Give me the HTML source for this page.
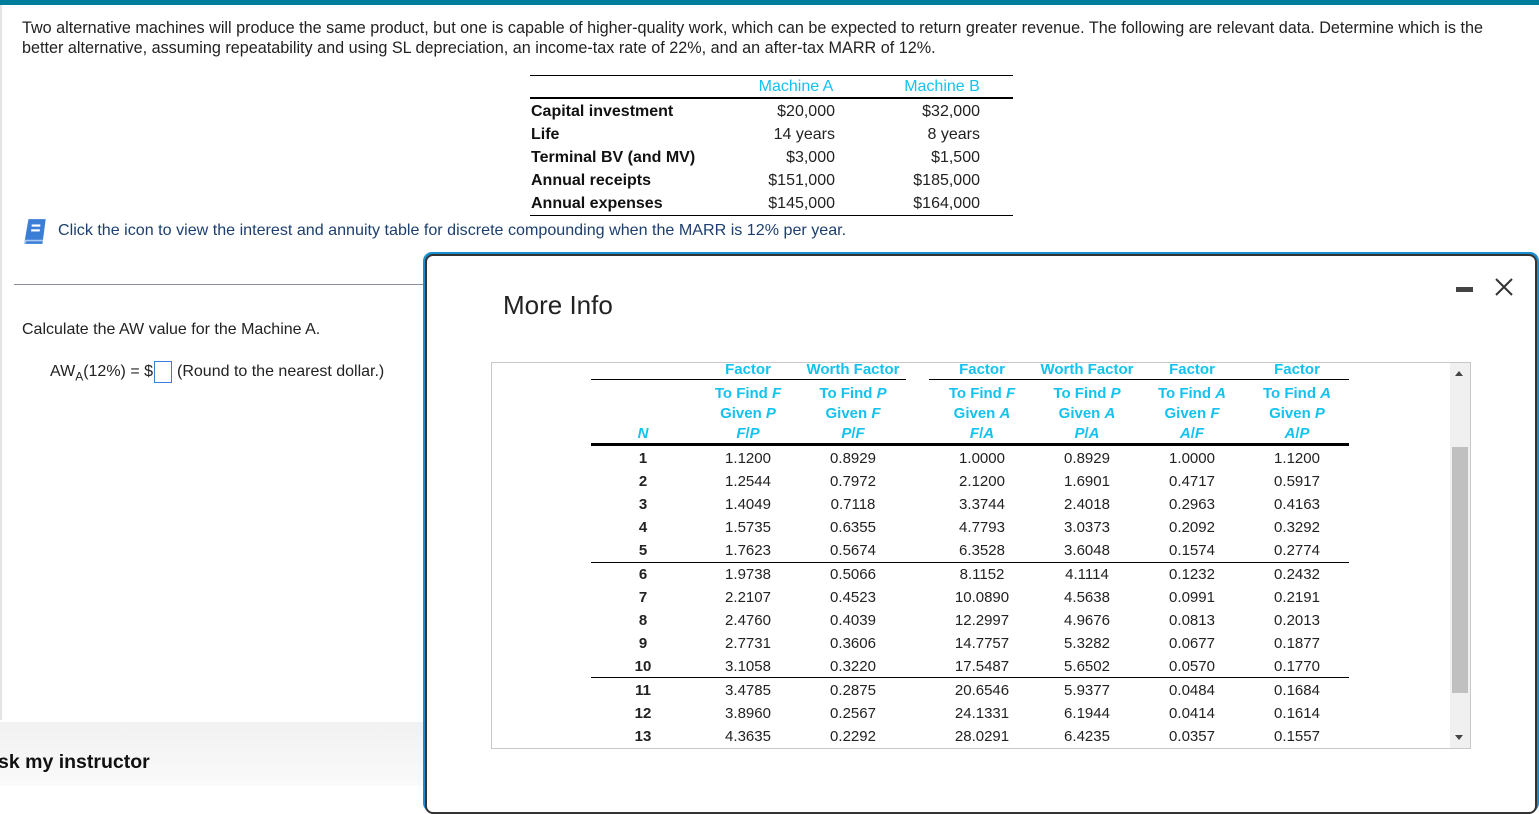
<!DOCTYPE html>
<html><head><meta charset="utf-8"><style>
*{margin:0;padding:0;box-sizing:border-box}
body{width:1539px;height:786px;position:relative;overflow:hidden;background:#fff;font-family:"Liberation Sans",Arial,sans-serif;color:#222}
.a{position:absolute;white-space:nowrap}
.c{position:absolute;white-space:nowrap;transform:translateX(-50%)}
.r{position:absolute;white-space:nowrap;transform:translateX(-100%)}
.cy{color:#14c2ef;font-weight:bold;font-size:15px}
.hl{position:absolute;background:#000}
.t{font-size:16px;color:#222}
.b{font-weight:bold;font-size:16px;color:#111}
</style></head><body>
<div class="a" style="left:0;top:0;width:1539px;height:5px;background:#007c9c"></div>
<div class="a" style="left:0;top:5px;width:2px;height:715px;background:#e4e4e4"></div>
<div class="a" style="left:22px;top:18px;font-size:16.2px;line-height:20px">Two alternative machines will produce the same product, but one is capable of higher-quality work, which can be expected to return greater revenue. The following are relevant data. Determine which is the<br>better alternative, assuming repeatability and using SL depreciation, an income-tax rate of 22%, and an after-tax MARR of 12%.</div>

<div class="hl" style="left:530px;top:75px;width:483px;height:1px"></div>
<div class="hl" style="left:530px;top:97px;width:483px;height:2px"></div>
<div class="hl" style="left:530px;top:215px;width:483px;height:1px"></div>
<div class="c cy" style="left:796px;top:78px;font-weight:normal;font-size:16px">Machine A</div>
<div class="c cy" style="left:942px;top:78px;font-weight:normal;font-size:16px">Machine B</div>
<div class="a b" style="left:531px;top:103px">Capital investment</div>
<div class="a b" style="left:531px;top:126px">Life</div>
<div class="a b" style="left:531px;top:149px">Terminal BV (and MV)</div>
<div class="a b" style="left:531px;top:172px">Annual receipts</div>
<div class="a b" style="left:531px;top:195px">Annual expenses</div>
<div class="r t" style="left:835px;top:103px">$20,000</div><div class="r t" style="left:980px;top:103px">$32,000</div>
<div class="r t" style="left:835px;top:126px">14 years</div><div class="r t" style="left:980px;top:126px">8 years</div>
<div class="r t" style="left:835px;top:149px">$3,000</div><div class="r t" style="left:980px;top:149px">$1,500</div>
<div class="r t" style="left:835px;top:172px">$151,000</div><div class="r t" style="left:980px;top:172px">$185,000</div>
<div class="r t" style="left:835px;top:195px">$145,000</div><div class="r t" style="left:980px;top:195px">$164,000</div>

<svg class="a" style="left:22px;top:218px" width="28" height="28" viewBox="0 0 26 26"><path d="M6 1h16l-3 23H2z" fill="#3a7fd5"/><path d="M2.5 24l1-3h16" stroke="#a9c9f0" stroke-width="1.5" fill="none"/><rect x="9" y="6" width="8" height="2" fill="#fff"/><rect x="8.5" y="10.5" width="8" height="2" fill="#fff"/></svg>
<div class="a" style="left:58px;top:221px;font-size:16.1px;color:#1d3f6e">Click the icon to view the interest and annuity table for discrete compounding when the MARR is 12% per year.</div>

<div class="a" style="left:14px;top:284px;width:412px;height:1px;background:#8a8f98"></div>
<div class="a" style="left:22px;top:321px;font-size:16px">Calculate the AW value for the Machine A.</div>
<div class="a" style="left:50px;top:361px;font-size:16px">AW<sub style="font-size:12px">A</sub>(12%) = $<span style="display:inline-block;width:18px;height:22px;border:1px solid #3a7fd5;vertical-align:middle;margin:0 5px 0 1px"></span>(Round to the nearest dollar.)</div>

<div class="a" style="left:0;top:722px;width:426px;height:64px;background:linear-gradient(#f1f1f1,#fafafa)"></div>
<div class="a" style="left:-2px;top:751px;font-size:19.5px;font-weight:bold;color:#111">sk my instructor</div>

<!-- modal -->
<div class="a" style="left:423px;top:252px;width:1116px;height:560px;border:3px solid #1a8fd0;border-radius:9px"></div>
<div class="a" style="left:425px;top:254px;width:1112px;height:560px;border:2px solid #333;border-radius:8px;background:#fff"></div>
<div class="a" style="left:503px;top:290px;font-size:26px;color:#222">More Info</div>
<div class="a" style="left:1456px;top:287px;width:17px;height:5px;background:#444"></div>
<svg class="a" style="left:1494px;top:277px" width="20" height="20"><path d="M2 2L18 18M18 2L2 18" stroke="#333" stroke-width="2"/></svg>

<div class="a" style="left:491px;top:362px;width:980px;height:387px;border:1px solid #c8c8c8"></div>
<div class="a" style="left:1450px;top:363px;width:20px;height:385px;background:#f0f0f0"></div>
<div class="a" style="left:1452px;top:447px;width:16px;height:246px;background:#c0c0c0"></div>
<div class="a" style="left:1455px;top:371px;width:0;height:0;border-left:4px solid transparent;border-right:4px solid transparent;border-bottom:5px solid #444"></div>
<div class="a" style="left:1455px;top:735px;width:0;height:0;border-left:4px solid transparent;border-right:4px solid transparent;border-top:5px solid #444"></div>

<div class="hl" style="left:591px;top:379px;width:315px;height:1px"></div>
<div class="hl" style="left:929px;top:379px;width:420px;height:1px"></div>
<div class="hl" style="left:591px;top:443px;width:758px;height:3px"></div>
<div class="hl" style="left:591px;top:562px;width:758px;height:1px"></div>
<div class="hl" style="left:591px;top:677px;width:758px;height:1px"></div>

<div class="c cy" style="left:748px;top:361px">Factor</div>
<div class="c cy" style="left:853px;top:361px">Worth Factor</div>
<div class="c cy" style="left:982px;top:361px">Factor</div>
<div class="c cy" style="left:1087px;top:361px">Worth Factor</div>
<div class="c cy" style="left:1192px;top:361px">Factor</div>
<div class="c cy" style="left:1297px;top:361px">Factor</div>

<div class="c cy" style="left:748px;top:385px">To Find <i>F</i></div>
<div class="c cy" style="left:853px;top:385px">To Find <i>P</i></div>
<div class="c cy" style="left:982px;top:385px">To Find <i>F</i></div>
<div class="c cy" style="left:1087px;top:385px">To Find <i>P</i></div>
<div class="c cy" style="left:1192px;top:385px">To Find <i>A</i></div>
<div class="c cy" style="left:1297px;top:385px">To Find <i>A</i></div>
<div class="c cy" style="left:748px;top:405px">Given <i>P</i></div>
<div class="c cy" style="left:853px;top:405px">Given <i>F</i></div>
<div class="c cy" style="left:982px;top:405px">Given <i>A</i></div>
<div class="c cy" style="left:1087px;top:405px">Given <i>A</i></div>
<div class="c cy" style="left:1192px;top:405px">Given <i>F</i></div>
<div class="c cy" style="left:1297px;top:405px">Given <i>P</i></div>
<div class="c cy" style="left:643px;top:425px"><i>N</i></div>
<div class="c cy" style="left:748px;top:425px"><i>F</i>/<i>P</i></div>
<div class="c cy" style="left:853px;top:425px"><i>P</i>/<i>F</i></div>
<div class="c cy" style="left:982px;top:425px"><i>F</i>/<i>A</i></div>
<div class="c cy" style="left:1087px;top:425px"><i>P</i>/<i>A</i></div>
<div class="c cy" style="left:1192px;top:425px"><i>A</i>/<i>F</i></div>
<div class="c cy" style="left:1297px;top:425px"><i>A</i>/<i>P</i></div>

<div class="a" style="left:0;top:0;font-size:15px">
<div class="c" style="left:643px;top:450px;font-weight:bold">1</div><div class="c" style="left:748px;top:450px">1.1200</div><div class="c" style="left:853px;top:450px">0.8929</div><div class="c" style="left:982px;top:450px">1.0000</div><div class="c" style="left:1087px;top:450px">0.8929</div><div class="c" style="left:1192px;top:450px">1.0000</div><div class="c" style="left:1297px;top:450px">1.1200</div>
<div class="c" style="left:643px;top:473px;font-weight:bold">2</div><div class="c" style="left:748px;top:473px">1.2544</div><div class="c" style="left:853px;top:473px">0.7972</div><div class="c" style="left:982px;top:473px">2.1200</div><div class="c" style="left:1087px;top:473px">1.6901</div><div class="c" style="left:1192px;top:473px">0.4717</div><div class="c" style="left:1297px;top:473px">0.5917</div>
<div class="c" style="left:643px;top:496px;font-weight:bold">3</div><div class="c" style="left:748px;top:496px">1.4049</div><div class="c" style="left:853px;top:496px">0.7118</div><div class="c" style="left:982px;top:496px">3.3744</div><div class="c" style="left:1087px;top:496px">2.4018</div><div class="c" style="left:1192px;top:496px">0.2963</div><div class="c" style="left:1297px;top:496px">0.4163</div>
<div class="c" style="left:643px;top:519px;font-weight:bold">4</div><div class="c" style="left:748px;top:519px">1.5735</div><div class="c" style="left:853px;top:519px">0.6355</div><div class="c" style="left:982px;top:519px">4.7793</div><div class="c" style="left:1087px;top:519px">3.0373</div><div class="c" style="left:1192px;top:519px">0.2092</div><div class="c" style="left:1297px;top:519px">0.3292</div>
<div class="c" style="left:643px;top:542px;font-weight:bold">5</div><div class="c" style="left:748px;top:542px">1.7623</div><div class="c" style="left:853px;top:542px">0.5674</div><div class="c" style="left:982px;top:542px">6.3528</div><div class="c" style="left:1087px;top:542px">3.6048</div><div class="c" style="left:1192px;top:542px">0.1574</div><div class="c" style="left:1297px;top:542px">0.2774</div>
<div class="c" style="left:643px;top:566px;font-weight:bold">6</div><div class="c" style="left:748px;top:566px">1.9738</div><div class="c" style="left:853px;top:566px">0.5066</div><div class="c" style="left:982px;top:566px">8.1152</div><div class="c" style="left:1087px;top:566px">4.1114</div><div class="c" style="left:1192px;top:566px">0.1232</div><div class="c" style="left:1297px;top:566px">0.2432</div>
<div class="c" style="left:643px;top:589px;font-weight:bold">7</div><div class="c" style="left:748px;top:589px">2.2107</div><div class="c" style="left:853px;top:589px">0.4523</div><div class="c" style="left:982px;top:589px">10.0890</div><div class="c" style="left:1087px;top:589px">4.5638</div><div class="c" style="left:1192px;top:589px">0.0991</div><div class="c" style="left:1297px;top:589px">0.2191</div>
<div class="c" style="left:643px;top:612px;font-weight:bold">8</div><div class="c" style="left:748px;top:612px">2.4760</div><div class="c" style="left:853px;top:612px">0.4039</div><div class="c" style="left:982px;top:612px">12.2997</div><div class="c" style="left:1087px;top:612px">4.9676</div><div class="c" style="left:1192px;top:612px">0.0813</div><div class="c" style="left:1297px;top:612px">0.2013</div>
<div class="c" style="left:643px;top:635px;font-weight:bold">9</div><div class="c" style="left:748px;top:635px">2.7731</div><div class="c" style="left:853px;top:635px">0.3606</div><div class="c" style="left:982px;top:635px">14.7757</div><div class="c" style="left:1087px;top:635px">5.3282</div><div class="c" style="left:1192px;top:635px">0.0677</div><div class="c" style="left:1297px;top:635px">0.1877</div>
<div class="c" style="left:643px;top:658px;font-weight:bold">10</div><div class="c" style="left:748px;top:658px">3.1058</div><div class="c" style="left:853px;top:658px">0.3220</div><div class="c" style="left:982px;top:658px">17.5487</div><div class="c" style="left:1087px;top:658px">5.6502</div><div class="c" style="left:1192px;top:658px">0.0570</div><div class="c" style="left:1297px;top:658px">0.1770</div>
<div class="c" style="left:643px;top:682px;font-weight:bold">11</div><div class="c" style="left:748px;top:682px">3.4785</div><div class="c" style="left:853px;top:682px">0.2875</div><div class="c" style="left:982px;top:682px">20.6546</div><div class="c" style="left:1087px;top:682px">5.9377</div><div class="c" style="left:1192px;top:682px">0.0484</div><div class="c" style="left:1297px;top:682px">0.1684</div>
<div class="c" style="left:643px;top:705px;font-weight:bold">12</div><div class="c" style="left:748px;top:705px">3.8960</div><div class="c" style="left:853px;top:705px">0.2567</div><div class="c" style="left:982px;top:705px">24.1331</div><div class="c" style="left:1087px;top:705px">6.1944</div><div class="c" style="left:1192px;top:705px">0.0414</div><div class="c" style="left:1297px;top:705px">0.1614</div>
<div class="c" style="left:643px;top:728px;font-weight:bold">13</div><div class="c" style="left:748px;top:728px">4.3635</div><div class="c" style="left:853px;top:728px">0.2292</div><div class="c" style="left:982px;top:728px">28.0291</div><div class="c" style="left:1087px;top:728px">6.4235</div><div class="c" style="left:1192px;top:728px">0.0357</div><div class="c" style="left:1297px;top:728px">0.1557</div>
</div>
</body></html>
